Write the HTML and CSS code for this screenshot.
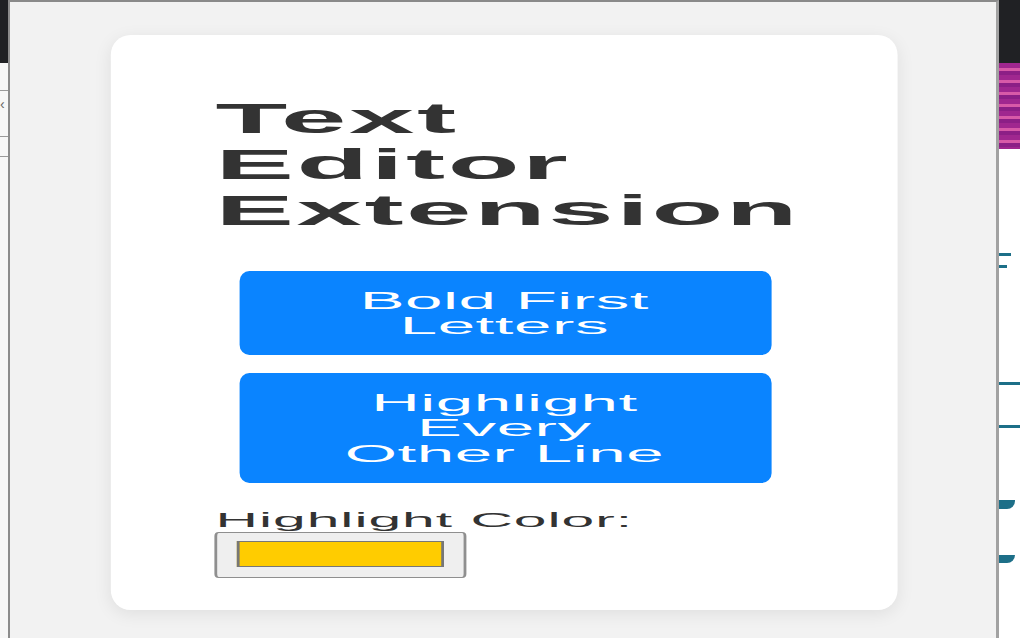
FILE: index.html
```html
<!DOCTYPE html>
<html lang="en">
<head>
    <meta charset="UTF-8">
    <title>Text Editor Extension</title>
    <link rel="stylesheet" href="styles.css">
</head>
<body>
    <div class="frame">
        <!-- page behind the popup, left side -->
        <div class="edge edge-left">
            <div class="edge-top"></div>
            <div class="edge-rule"></div>
            <div class="edge-chevron">&lsaquo;</div>
            <div class="edge-rule"></div>
            <div class="edge-rule short"></div>
        </div>

        <div class="popup">
            <div class="stage">
                <div class="card">
                    <h1 class="title">Text Editor Extension</h1>
                    <button class="action" id="bold-first">Bold First Letters</button>
                    <button class="action last" id="highlight-lines">Highlight Every Other Line</button>
                    <label class="field-label" for="hl-color">Highlight Color:</label>
                    <input class="color-pick" type="color" id="hl-color" value="#ffcc00">
                </div>
            </div>
        </div>

        <!-- page behind the popup, right side -->
        <div class="edge edge-right">
            <div class="edge-top"></div>
            <div class="edge-banner"></div>
            <div class="edge-page">
                <span class="frag f1"></span>
                <span class="frag f2"></span>
                <span class="frag f3"></span>
                <span class="frag f4"></span>
                <span class="frag f5"></span>
                <span class="frag f6"></span>
            </div>
        </div>
    </div>
</body>
</html>
```

FILE: styles.css
```css
/* Reset et variables */
:root {
    --color-bg: #f2f2f2;
    --color-card: #ffffff;
    --color-text: #333333;
    --color-btn: #0a84ff;
    --chrome-dark: #202124;
    --stretch: 2.8;
}

* {
    box-sizing: border-box;
}

body {
    margin: 0;
    height: 638px;
    overflow: hidden;
    font-family: 'Liberation Sans', Arial, sans-serif;
    background: var(--color-bg);
}

.frame {
    display: flex;
    height: 638px;
}

/* Bords de la page derrière */
.edge {
    display: flex;
    flex-direction: column;
    background: #f7f7f7;
}

.edge-left {
    width: 8px;
}

.edge-right {
    width: 21px;
    background: #ffffff;
}

.edge-top {
    height: 63px;
    background: var(--chrome-dark);
}

.edge-rule {
    height: 1px;
    margin-top: 27px;
    background: #9a9a9a;
}

.edge-rule.short {
    margin-top: 19px;
}

.edge-chevron {
    height: 10px;
    margin-top: 8px;
    font-size: 14px;
    line-height: 10px;
    color: #666;
}

.edge-banner {
    height: 86px;
    background: repeating-linear-gradient(180deg, #a0278f 0 5px, #d85aa8 5px 8px, #8c1f86 8px 12px);
}

.edge-page {
    display: flex;
    flex-direction: column;
    padding-top: 104px;
}

.frag {
    display: block;
    height: 3px;
    background: #1d6f88;
}

.f1 { width: 12px; margin-top: 0; }
.f2 { width: 8px; margin-top: 9px; }
.f3 { width: 21px; margin-top: 114px; height: 3px; }
.f4 { width: 21px; margin-top: 40px; height: 3px; }
.f5 { width: 16px; margin-top: 72px; height: 9px; border-radius: 0 0 8px 0; }
.f6 { width: 16px; margin-top: 46px; height: 8px; border-radius: 0 0 8px 0; }

/* Popup */
.popup {
    flex: 1;
    border-top: 2px solid #8a8a8a;
    border-left: 2px solid #8c8c8c;
    border-right: 3px solid #a2a2a2;
    background: var(--color-bg);
    overflow: hidden;
}

/* la fenêtre est affichée étirée en largeur */
.stage {
    width: 351.8px;
    padding-top: 33px;
    transform: scaleX(var(--stretch));
    transform-origin: 0 0;
}

.card {
    width: 280.4px;
    margin-left: 36.4px;
    padding: 61px 37px 32px;
    background: var(--color-card);
    border-radius: 7px / 20px;
    box-shadow: 0 4px 10px rgba(0, 0, 0, 0.08);
}

.title {
    margin: 0 0 37px;
    font-size: 42px;
    line-height: 46px;
    font-weight: 700;
    letter-spacing: 0.9px;
    color: var(--color-text);
}

.action {
    display: block;
    width: 190px;
    margin: 0 auto 18px;
    padding: 16.5px 35px;
    border: none;
    border-radius: 3.5px / 10px;
    background: var(--color-btn);
    color: #ffffff;
    font-family: inherit;
    font-size: 24px;
    line-height: 25.5px;
    letter-spacing: 0.2px;
    cursor: pointer;
}

.action.last {
    margin-bottom: 24px;
}

.field-label {
    display: block;
    font-size: 21px;
    line-height: 25px;
    letter-spacing: 0.35px;
    color: var(--color-text);
}

.color-pick {
    display: block;
    width: 90px;
    height: 46px;
    margin: 0;
    padding: 8px 7px 10px;
    border: 1px solid #8f8f8f;
    border-radius: 1.5px / 4px;
    background: #efefef;
}

.color-pick::-webkit-color-swatch-wrapper {
    padding: 0;
}

.color-pick::-webkit-color-swatch {
    border: 1px solid #777;
    border-radius: 0;
}
```
